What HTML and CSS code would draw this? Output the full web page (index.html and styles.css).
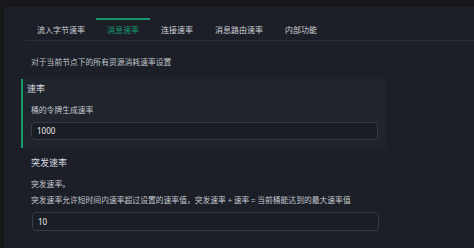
FILE: index.html
```html
<!DOCTYPE html>
<html lang="zh">
<head>
<meta charset="utf-8">
<link rel="stylesheet" href="styles.css">
</head>
<body>
<div class="panel">
  <div class="tabs">
    <div class="tab">流入字节速率</div>
    <div class="tab active">消息速率</div>
    <div class="tab">连接速率</div>
    <div class="tab">消息路由速率</div>
    <div class="tab">内部功能</div>
  </div>
  <div class="desc">对于当前节点下的所有资源消耗速率设置</div>
  <div class="card">
    <div class="title title-hl">速率</div>
    <div class="label">桶的令牌生成速率</div>
    <div class="input">1000</div>
  </div>
  <div class="section">
    <div class="title">突发速率</div>
    <div class="label first">突发速率。</div>
    <div class="label">突发速率允许短时间内速率超过设置的速率值，突发速率 + 速率 = 当前桶能达到的最大速率值</div>
    <div class="input">10</div>
  </div>
</div>
</body>
</html>
```
FILE: styles.css
```css
* { box-sizing: border-box; }
html, body { margin: 0; padding: 0; }
body {
  background: #16181c;
  width: 474px;
  height: 248px;
  overflow: hidden;
  font-family: "Noto Sans CJK SC", "Noto Sans", sans-serif;
  color: #c9cdd3;
}
.panel {
  margin: 7px 0 0 4px;
  height: 241px;
  background: #1c1f27;
  padding: 11px 0 0 17px;
}
.tabs {
  display: flex;
  margin-left: 4px;
  border-bottom: 1px solid #2b2f37;
}
.tab {
  font-size: 8px;
  line-height: 20px;
  height: 22px;
  padding: 2px 11px 0;
  color: #cdd1d6;
  white-space: nowrap;
}
.tab:first-child { padding-left: 12px; padding-right: 11px; }
.tab.active {
  color: #1a9a6d;
  border-top: 2px solid #17976a;
  padding-top: 0;
}
.desc {
  font-size: 7.8px;
  line-height: 12px;
  margin-top: 15px;
  padding-left: 10px;
  color: #bfc3c9;
}
.card {
  margin-top: 11px;
  width: 365px;
  background: #20242d;
  border-left: 2px solid #17976a;
  padding: 3px 7px 8px 8px;
}
.title {
  font-size: 9px;
  line-height: 14px;
  color: #d8dbe0;
}
.title-hl { margin-left: -4px; }
.label {
  font-size: 7.8px;
  line-height: 12px;
  margin-top: 8px;
  color: #c3c7cd;
}
.section .label + .label { margin-top: 4px; }
.input {
  margin-top: 6px;
  margin-left: 1px;
  width: 347px;
  height: 18px;
  border: 1px solid #363a43;
  border-radius: 4px;
  background: #1a1d24;
  font-family: "Noto Sans", sans-serif;
  font-size: 8px;
  line-height: 16px;
  padding-left: 5px;
  color: #e8eaed;
}
.card .input { margin-left: 0; }
.section {
  margin-top: 8px;
  padding-left: 10px;
}
.section .input { height: 19px; line-height: 17px; }
```
